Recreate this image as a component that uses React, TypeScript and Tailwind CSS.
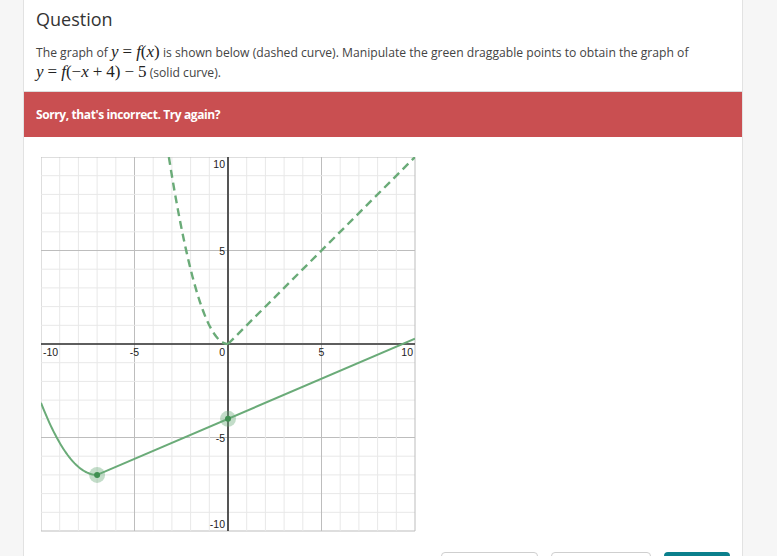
import React from 'react';

const S = 18.7;
const O = 187;
const px = (x: number) => O + S * x;
const py = (y: number) => O - S * y;

const GREEN = '#6aab78';

// build a polyline path from a function over [a, b]
const pathOf = (fn: (x: number) => number, a: number, b: number, steps = 60) => {
  const pts: string[] = [];
  for (let i = 0; i <= steps; i++) {
    const x = a + ((b - a) * i) / steps;
    pts.push(`${i === 0 ? 'M' : 'L'}${px(x).toFixed(2)},${py(fn(x)).toFixed(2)}`);
  }
  return pts.join(' ');
};

const M: React.FC<{ children: React.ReactNode }> = ({ children }) => (
  <span className="text-[17px] text-[#222]" style={{ fontFamily: '"Liberation Serif", serif' }}>
    {children}
  </span>
);
const I: React.FC<{ children: React.ReactNode }> = ({ children }) => <i>{children}</i>;
const Op: React.FC<{ children: React.ReactNode }> = ({ children }) => (
  <span className="mx-[4px] not-italic">{children}</span>
);

const Graph: React.FC = () => {
  const ticks = Array.from({ length: 21 }, (_, i) => i - 10);
  const dashedLeft = pathOf(x => x * x, -Math.sqrt(10), 0, 40);
  const dashedRight = `M${px(0)},${py(0)} L${px(10)},${py(10)}`;
  const solidLeft = pathOf(x => (3 / 7) * (x + 7) ** 2 - 7, -10, -7, 40);
  const solidRight = `M${px(-7)},${py(-7)} L${px(10)},${py(-7 + (3 / 7) * 17)}`;

  return (
    <svg width={375} height={375} viewBox="0 0 375 375" className="block">
      <rect x={0} y={0} width={374} height={374} fill="#fff" />
      {ticks.map(t => (
        <g key={t}>
          <line x1={px(t)} y1={0} x2={px(t)} y2={374} stroke={t % 5 === 0 ? '#bdbdbd' : '#e8e8e8'} strokeWidth={1} />
          <line x1={0} y1={py(t)} x2={374} y2={py(t)} stroke={t % 5 === 0 ? '#bdbdbd' : '#e8e8e8'} strokeWidth={1} />
        </g>
      ))}
      <line x1={0} y1={py(0)} x2={374} y2={py(0)} stroke="#333" strokeWidth={1.6} />
      <line x1={px(0)} y1={0} x2={px(0)} y2={374} stroke="#333" strokeWidth={1.6} />

      <g fontFamily='"Liberation Sans", Arial, sans-serif' fontSize={10.5} fill="#222">
        <text x={2} y={py(0) + 12}>-10</text>
        <text x={px(-5)} y={py(0) + 12} textAnchor="middle">-5</text>
        <text x={px(0) - 3} y={py(0) + 12} textAnchor="end">0</text>
        <text x={px(5)} y={py(0) + 12} textAnchor="middle">5</text>
        <text x={372} y={py(0) + 12} textAnchor="end">10</text>
        <text x={px(0) - 3} y={11} textAnchor="end">10</text>
        <text x={px(0) - 3} y={py(5) + 4} textAnchor="end">5</text>
        <text x={px(0) - 3} y={py(-5) + 4} textAnchor="end">-5</text>
        <text x={px(0) - 3} y={371} textAnchor="end">-10</text>
      </g>

      <defs>
        <clipPath id="plot">
          <rect x={0} y={0} width={374} height={374} />
        </clipPath>
      </defs>
      <g clipPath="url(#plot)" fill="none" stroke={GREEN} strokeWidth={2.4}>
        <path d={dashedLeft} strokeDasharray="8 5" />
        <path d={dashedRight} strokeDasharray="8 5" />
        <path d={solidLeft} strokeWidth={2} />
        <path d={solidRight} strokeWidth={2} />
      </g>

      {[[-7, -7], [0, -4]].map(([x, y]) => (
        <g key={`${x}${y}`}>
          <circle cx={px(x)} cy={py(y)} r={8} fill={GREEN} opacity={0.4} />
          <circle cx={px(x)} cy={py(y)} r={3} fill="#3f8f51" />
        </g>
      ))}
    </svg>
  );
};

const App: React.FC = () => {
  return (
    <div
      className="w-[777px] h-[556px] overflow-hidden bg-[#f6f6f6]"
      style={{ fontFamily: '"Open Sans", sans-serif' }}
    >
      <div className="ml-[23px] w-[720px] h-full bg-white border-x border-[#e2e2e2]">
        {/* Header */}
        <div className="px-3 pt-[6px] pb-[9px] border-b border-[#dcdcdc]">
          <h1 className="text-[18px] leading-[26px] text-[#333]">Question</h1>
          <p className="mt-[10px] text-[12.15px] leading-[19px] text-[#444]">
            The graph of{' '}
            <M>
              <I>y</I>
              <Op>=</Op>
              <I>f</I>(<I>x</I>)
            </M>{' '}
            is shown below (dashed curve). Manipulate the green draggable points to obtain the graph of
            <br />
            <M>
              <I>y</I>
              <Op>=</Op>
              <I>f</I>(−<I>x</I>
              <Op>+</Op>4)
              <Op>−</Op>5
            </M>{' '}
            (solid curve).
          </p>
        </div>

        {/* Feedback */}
        <div className="h-[45px] bg-[#c94f51] px-3 flex items-center">
          <span className="text-white text-[12px] font-bold tracking-[-0.4px]">Sorry, that's incorrect. Try again?</span>
        </div>

        {/* Graph */}
        <div className="mt-[20px] ml-[17px]">
          <Graph />
        </div>

        {/* Buttons */}
        <div className="mt-[20px] pr-[12px] flex justify-end gap-[13px]">
          <div className="w-[97px] h-[34px] rounded-[4px] border border-[#cfcfcf] bg-white" />
          <div className="w-[100px] h-[34px] rounded-[4px] border border-[#cfcfcf] bg-white" />
          <div className="w-[66px] h-[34px] rounded-[4px] bg-[#0a7f8c]" />
        </div>
      </div>
    </div>
  );
};

export default App;
